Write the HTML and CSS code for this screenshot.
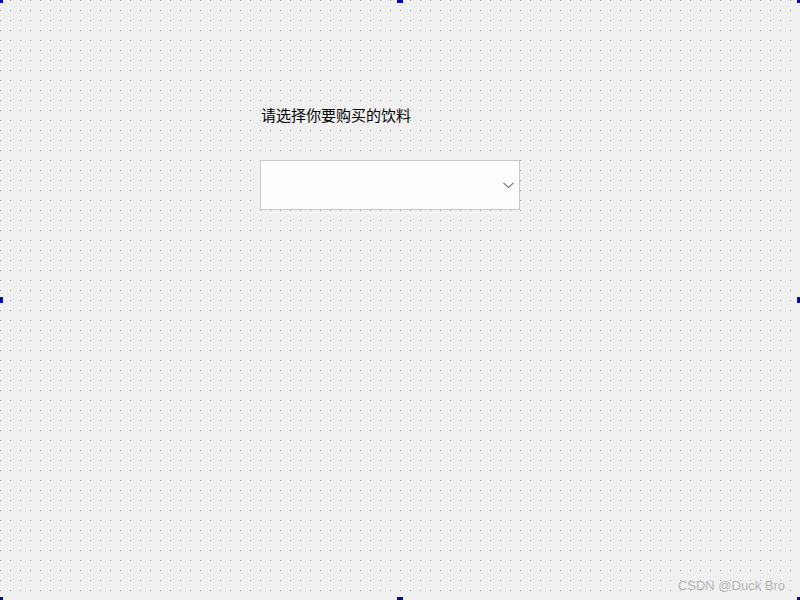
FILE: index.html
```html
<!DOCTYPE html>
<html lang="zh-CN">
<head>
<meta charset="utf-8">
<title>Form</title>
<link rel="stylesheet" href="styles.css">
</head>
<body>
<div class="form">
  <div class="content">
    <div class="label">请选择你要购买的饮料</div>
    <div class="combo">
      <svg class="chevron" width="11" height="7" viewBox="0 0 11 7"><path d="M0.5 0.8 L5.5 5.6 L10.5 0.8" fill="none" stroke="#6a6a6a" stroke-width="1.1"/></svg>
    </div>
  </div>
  <span class="handle h-tl"></span>
  <span class="handle h-tc"></span>
  <span class="handle h-tr"></span>
  <span class="handle h-ml"></span>
  <span class="handle h-mr"></span>
  <span class="handle h-bl"></span>
  <span class="handle h-bc"></span>
  <span class="handle h-br"></span>
  <div class="watermark">CSDN @Duck Bro</div>
</div>
</body>
</html>
```

FILE: styles.css
```css
html, body {
  margin: 0;
  padding: 0;
  overflow: hidden;
}
.form {
  position: relative;
  width: 800px;
  height: 600px;
  background-color: #f0f0f0;
  background-image:
    linear-gradient(90deg, transparent 1px, #f0f0f0 1px),
    linear-gradient(180deg, #a0a0a0 1px, transparent 1px);
  background-size: 10px 10px;
  font-family: "Noto Sans CJK SC", "Noto Sans", sans-serif;
  overflow: hidden;
}
.content {
  padding: 100px 0 0 260px;
  display: flex;
  flex-direction: column;
}
.label {
  height: 30px;
  line-height: 30px;
  font-size: 15px;
  color: #000;
  padding-left: 1px;
}
.combo {
  margin-top: 30px;
  width: 260px;
  height: 50px;
  box-sizing: border-box;
  border: 1px solid #c9c9c9;
  background: #fdfdfd;
  display: flex;
  align-items: center;
  justify-content: flex-end;
  padding-right: 5px;
}
.handle {
  position: absolute;
  width: 4px;
  height: 4px;
  border: 1px solid #0000ff;
  background: #000080;
}
.h-tl { left: -3px; top: -3px; }
.h-tc { left: 397px; top: -3px; }
.h-tr { left: 797px; top: -3px; }
.h-ml { left: -3px; top: 297px; }
.h-mr { left: 797px; top: 297px; }
.h-bl { left: -3px; top: 597px; }
.h-bc { left: 397px; top: 597px; }
.h-br { left: 797px; top: 597px; }
.watermark {
  position: absolute;
  right: 15px;
  bottom: 7px;
  font-family: "Liberation Sans", Arial, sans-serif;
  font-size: 13px;
  color: rgba(150, 150, 150, 0.75);
  text-shadow: 0 0 1px rgba(255,255,255,0.6);
}
```
